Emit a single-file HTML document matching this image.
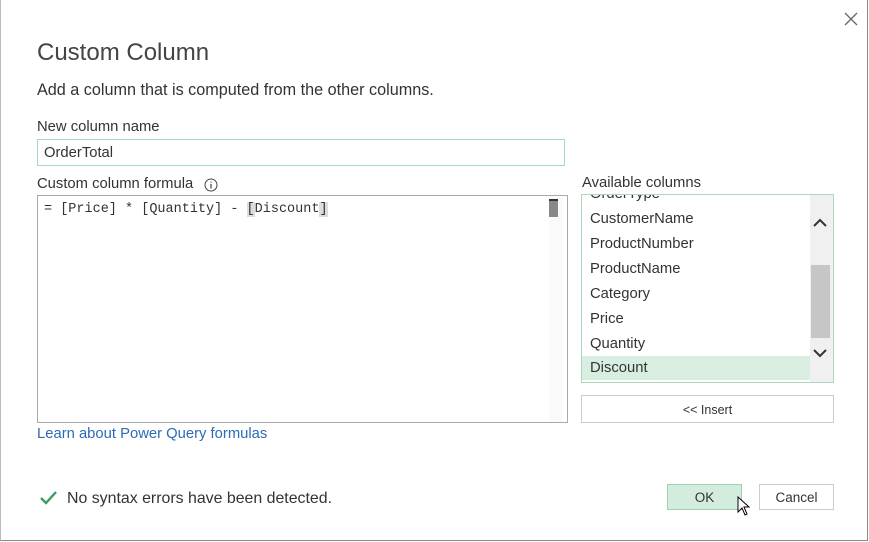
<!DOCTYPE html>
<html><head><style>
*{margin:0;padding:0;box-sizing:border-box}
body{width:869px;height:542px;background:#fff;font-family:"Liberation Sans",sans-serif;color:#333;position:relative;overflow:hidden}
.a{position:absolute}
.frame{left:0;top:0;width:868px;height:541px;border-right:1px solid #8a8a8a;border-bottom:1px solid #8a8a8a;border-left:1px solid #bbb}
.t{font-size:14.8px;color:#333}
.item{position:absolute;left:8px;font-size:14.8px;color:#333}
</style></head><body>
<div class="a frame"></div>
<svg class="a" style="left:843px;top:11px" width="16" height="16"><path d="M2 2L14 14M14 2L2 14" stroke="#666" stroke-width="1.3"/></svg>
<div class="a" style="left:37px;top:39px;font-size:24px;color:#444">Custom Column</div>
<div class="a" style="left:37px;top:81px;font-size:16.2px;color:#333">Add a column that is computed from the other columns.</div>
<div class="a t" style="left:37px;top:119px">New column name</div>
<div class="a" style="left:37px;top:139px;width:528px;height:27px;border:1px solid #a9d8bb;font-size:14.8px;padding:5px 6px;color:#333">OrderTotal</div>
<div class="a t" style="left:37px;top:176px">Custom column formula</div>
<svg class="a" style="left:204px;top:178px" width="14" height="14"><circle cx="7" cy="7" r="6" fill="none" stroke="#444"/><path d="M7 6v4.5M7 3.6v1" stroke="#444" stroke-width="1.2"/></svg>
<div class="a" style="left:37px;top:195px;width:531px;height:228px;border:1px solid #aaa"></div>
<div class="a" style="left:44px;top:202px;font-family:'Liberation Mono',monospace;font-size:13.5px;color:#333;white-space:pre">= [Price] * [Quantity] - <span style="background:#ddd">[</span>Discount<span style="background:#ddd">]</span></div>
<div class="a" style="left:549px;top:198px;width:13px;height:224px;background:#fafafa"></div>
<div class="a" style="left:549px;top:199px;width:9px;height:18px;background:#888;border-top:2px solid #333"></div>
<div class="a" style="left:37px;top:426px;font-size:14.8px;color:#2d6bb5">Learn about Power Query formulas</div>
<div class="a t" style="left:582px;top:175px">Available columns</div>
<div class="a" style="left:581px;top:194px;width:253px;height:189px;border:1px solid #a9d8bb;overflow:hidden">
 <div class="item" style="top:-9px">OrderType</div>
 <div class="item" style="top:16px">CustomerName</div>
 <div class="item" style="top:41px">ProductNumber</div>
 <div class="item" style="top:66px">ProductName</div>
 <div class="item" style="top:91px">Category</div>
 <div class="item" style="top:116px">Price</div>
 <div class="item" style="top:141px">Quantity</div>
 <div style="position:absolute;left:0;top:161px;width:228px;height:24px;background:#d7eee0"></div>
 <div class="item" style="top:165px">Discount</div>
 <div style="position:absolute;left:228px;top:0;width:23px;height:187px;background:#f0f0f0"></div>
 <div style="position:absolute;left:229px;top:70px;width:19px;height:73px;background:#c6c6c6"></div>
</div>
<svg class="a" style="left:811px;top:216px" width="18" height="14"><path d="M3 10L9 4L15 10" fill="none" stroke="#333" stroke-width="2"/></svg>
<svg class="a" style="left:811px;top:346px" width="18" height="14"><path d="M3 4L9 10L15 4" fill="none" stroke="#333" stroke-width="2"/></svg>
<div class="a" style="left:581px;top:395px;width:253px;height:28px;border:1px solid #ccc;font-size:12.5px;text-align:center;line-height:28px;color:#333">&lt;&lt; Insert</div>
<svg class="a" style="left:39px;top:489px" width="20" height="18"><path d="M2 9L7 14L17 3" fill="none" stroke="#3e9b66" stroke-width="2.4"/></svg>
<div class="a" style="left:67px;top:490px;font-size:15.9px;color:#333">No syntax errors have been detected.</div>
<div class="a" style="left:667px;top:484px;width:75px;height:26px;background:#d3ecde;border:1px solid #9fd0b3;font-size:13.5px;text-align:center;line-height:25px">OK</div>
<div class="a" style="left:759px;top:484px;width:75px;height:26px;border:1px solid #ccc;font-size:13.5px;text-align:center;line-height:25px">Cancel</div>
<svg class="a" style="left:737px;top:496px" width="14" height="22"><path d="M1 1L1 16L5 12L8 19L10 18L7 11L12 11Z" fill="#fff" stroke="#000" stroke-width="1"/></svg>
</body></html>
